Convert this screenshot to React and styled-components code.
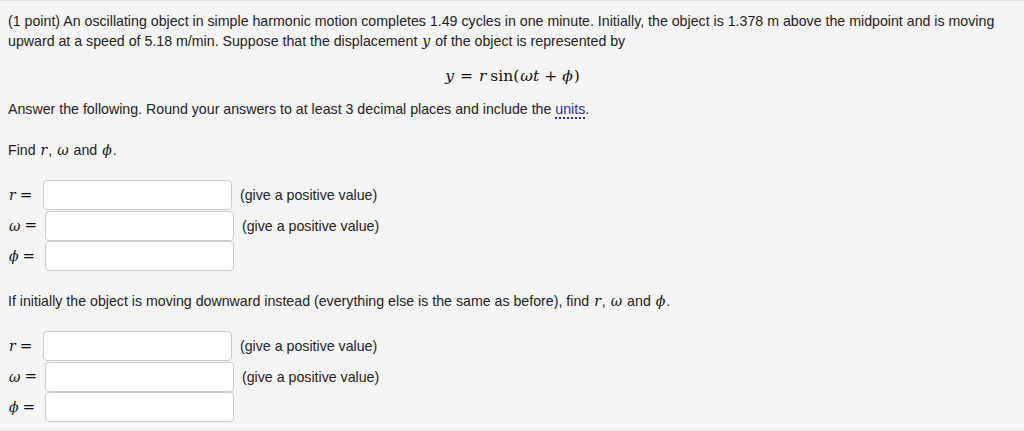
import React from "react";
import styled, { createGlobalStyle } from "styled-components";

const Global = createGlobalStyle`
  html, body { margin: 0; padding: 0; background: #f5f5f5; }
  body { font-family: "Liberation Sans", Arial, sans-serif; }
`;

const Page = styled.div`
  box-sizing: border-box;
  width: 1024px;
  height: 431px;
  background: #f5f5f5;
  border-top: 1px solid #e3e3e3;
  border-bottom: 1px solid #e3e3e3;
  padding: 10px 8px 0 8px;
  color: #222;
  font-size: 14.2px;
  line-height: 20px;
  overflow: hidden;
`;

const P = styled.p`
  margin: ${(p) => p.$mt || 0}px 0 ${(p) => p.$mb || 0}px 0;
`;

const Display = styled.div`
  text-align: center;
  height: 30px;
  line-height: 30px;
  margin: 10px 0 8px 0;
  font-family: "DejaVu Serif", serif;
  font-size: 15.5px;
  color: #111;
`;

const V = styled.i`
  font-family: "DejaVu Serif", serif;
  font-style: italic;
  font-size: ${(p) => p.$size || 14}px;
  line-height: 1;
  margin: 0 1px;
  color: #111;
`;

const Op = styled.span`
  font-family: "DejaVu Serif", serif;
  font-size: ${(p) => p.$size || 14}px;
  line-height: 1;
  margin: 0 ${(p) => p.$gap ?? 4}px;
  color: #111;
`;

const Fn = styled.span`
  margin-left: 3px;
  line-height: 1;
`;

const UnitsLink = styled.a`
  color: #2b2bb0;
  text-decoration: none;
  border-bottom: 2px dotted #2b2bb0;
`;

const Rows = styled.div`
  display: flex;
  flex-direction: column;
  gap: 0.5px;
`;

const Row = styled.div`
  display: flex;
  align-items: center;
  height: 30px;
`;

const Label = styled.span`
  display: inline-flex;
  align-items: center;
  width: ${(p) => p.$w}px;
  white-space: nowrap;
`;

const Input = styled.input`
  box-sizing: border-box;
  width: 189px;
  height: 30px;
  border: 1px solid #cccccc;
  border-radius: 4px;
  background: #fff;
  padding: 4px 6px;
  margin: 0;
`;

const Hint = styled.span`
  margin-left: 8px;
  color: #222;
`;

function AnswerRow({ sym, w, hint }) {
  return (
    <Row>
      <Label $w={w}>
        <V $size={14}>{sym}</V>
        <Op $size={15} $gap={3}>=</Op>
      </Label>
      <Input type="text" />
      {hint && <Hint>(give a positive value)</Hint>}
    </Row>
  );
}

function Block() {
  return (
    <Rows>
      <AnswerRow sym="r" w={35} hint />
      <AnswerRow sym="ω" w={37} hint />
      <AnswerRow sym="ϕ" w={37} />
    </Rows>
  );
}

export default function App() {
  return (
    <>
      <Global />
      <Page>
        <P>
          (1 point) An oscillating object in simple harmonic motion completes 1.49 cycles in one minute. Initially, the object is 1.378 m above the midpoint and is moving upward at a speed of 5.18 m/min. Suppose that the displacement <V>y</V> of the object is represented by
        </P>
        <Display>
          <V $size={15.5}>y</V>
          <Op $size={15.5} $gap={5}>=</Op>
          <V $size={15.5}>r</V>
          <Fn>sin(</Fn>
          <V $size={15.5}>ωt</V>
          <Op $size={15.5} $gap={4}>+</Op>
          <V $size={15.5}>ϕ</V>
          <span>)</span>
        </Display>
        <P $mb={21}>
          Answer the following. Round your answers to at least 3 decimal places and include the <UnitsLink href="#">units</UnitsLink>.
        </P>
        <P $mb={20}>
          Find <V>r</V>, <V>ω</V> and <V>ϕ</V>.
        </P>
        <Block />
        <P $mt={20} $mb={20}>
          If initially the object is moving downward instead (everything else is the same as before), find <V>r</V>, <V>ω</V> and <V>ϕ</V>.
        </P>
        <Block />
      </Page>
    </>
  );
}
